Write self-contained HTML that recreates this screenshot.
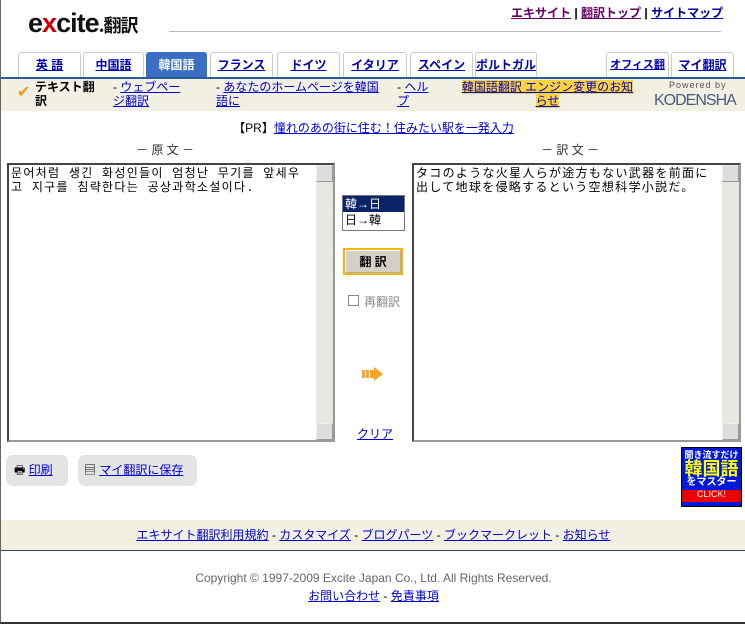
<!DOCTYPE html>
<html><head><meta charset="utf-8"><style>
*{margin:0;padding:0;box-sizing:border-box}
body{width:745px;height:624px;background:#fff;font-family:"Liberation Sans","Noto Sans CJK JP",sans-serif;font-size:12px;position:relative;overflow:hidden;border-left:1px solid #666;border-bottom:2px solid #333}
a{color:#0000cc;text-decoration:underline}
.abs{position:absolute}
.tab{position:absolute;top:52px;height:26px;border:1px solid #ccc;border-bottom:none;border-radius:3px 3px 0 0;background:#fff;text-align:center;line-height:25px;font-weight:bold;font-size:12px}
.tab a{color:#0000aa}
.tab.on{background:#3a6fc4;border-color:#3a6fc4}
.tab.on span{color:#fff}
.ta{position:absolute;top:163px;height:279px;border:2px inset #999;background:#fff;font-family:"Liberation Mono","Noto Sans CJK JP",monospace;font-size:12px;letter-spacing:1.3px;line-height:14px;padding:2px 20px 0 2px}
.sb{position:absolute;right:0;top:0;bottom:0;width:17px;background:#e8e8e2}
.sb i{position:absolute;left:0;width:17px;height:17px;background:#ddd;border:1px outset #eee}
.btn{position:absolute;top:455px;height:31px;background:#e4e4e4;border-radius:7px;line-height:31px;font-size:12px}
</style></head><body>
<div class="abs" style="left:27px;top:8px;font:bold 27px 'Liberation Sans',sans-serif;color:#111;letter-spacing:-1px">e<span style="color:#c00">x</span>cite<span style="font-size:18px;font-family:'Noto Sans CJK JP',sans-serif">.翻訳</span></div>
<div class="abs" style="left:168px;top:31px;width:552px;border-top:1px solid #bbb"></div>
<div class="abs" style="left:510px;top:4px;font-size:12px;font-weight:bold"><a style="color:#660066">エキサイト</a> | <a style="color:#660066">翻訳トップ</a> | <a style="color:#0000aa">サイトマップ</a></div>
<div class="tab" style="left:17px;width:63px"><a>英 語</a></div>
<div class="tab" style="left:82px;width:61px"><a>中国語</a></div>
<div class="tab on" style="left:145px;width:61px"><span>韓国語</span></div>
<div class="tab" style="left:209px;width:63px"><a>フランス</a></div>
<div class="tab" style="left:276px;width:63px"><a>ドイツ</a></div>
<div class="tab" style="left:342px;width:64px"><a>イタリア</a></div>
<div class="tab" style="left:409px;width:63px"><a>スペイン</a></div>
<div class="tab" style="left:474px;width:62px"><a>ポルトガル</a></div>
<div class="tab" style="left:605px;width:63px;font-size:11px"><a>オフィス翻訳</a></div>
<div class="tab" style="left:670px;width:63px"><a>マイ翻訳</a></div>
<div class="abs" style="left:0;top:77px;width:745px;height:2px;background:#2a5c9a"></div>
<div class="abs" style="left:0;top:79px;width:745px;height:32px;background:#f1f0e2"></div>
<div class="abs" style="left:16px;top:82px;color:#f39a1a;font-size:16px">✔</div>
<div class="abs" style="left:34px;top:80px;width:66px;font-weight:bold;line-height:14px">テキスト翻訳</div>
<div class="abs" style="left:112px;top:80px;width:70px;line-height:14px">- <a>ウェブページ翻訳</a></div>
<div class="abs" style="left:215px;top:80px;width:170px;line-height:14px">- <a>あなたのホームページを韓国語に</a></div>
<div class="abs" style="left:396px;top:80px;width:36px;line-height:14px">- <a>ヘルプ</a></div>
<div class="abs" style="left:455px;top:80px;width:183px;line-height:14px;text-align:center"><a style="background:#fcd33a">韓国語翻訳 エンジン変更のお知らせ</a></div>
<div class="abs" style="left:668px;top:80px;font-size:9px;color:#555;letter-spacing:1px">Powered by</div>
<div class="abs" style="left:653px;top:92px;font-size:16px;color:#4a5a7a;letter-spacing:-1px">KODENSHA</div>
<div class="abs" style="left:0;top:119px;width:745px;text-align:center">【PR】<a>憧れのあの街に住む！住みたい駅を一発入力</a></div>
<div class="abs" style="left:135px;top:141px;color:#333">－ 原 文 －</div>
<div class="abs" style="left:540px;top:141px;color:#333">－ 訳 文 －</div>
<div class="ta" style="left:6px;width:328px;padding-right:24px">문어처럼 생긴 화성인들이 엄청난 무기를 앞세우고 지구를 침략한다는 공상과학소설이다.<div class="sb"><i style="top:0"></i><i style="bottom:0"></i></div></div>
<div class="ta" style="left:411px;width:329px">タコのような火星人らが途方もない武器を前面に出して地球を侵略するという空想科学小説だ。<div class="sb"><i style="top:0"></i><i style="bottom:0"></i></div></div>
<div class="abs" style="left:341px;top:195px;width:63px;height:36px;border:1px solid #777;background:#fff;line-height:16px">
<div style="background:#0a246a;color:#fff;padding-left:2px">韓→日</div><div style="padding-left:2px">日→韓</div></div>
<div class="abs" style="left:342px;top:248px;width:60px;height:27px;border:2px solid #f5b400;background:#d4d0c8;text-align:center;line-height:22px;font-weight:bold"><div style="border:1px outset #fff;height:23px">翻 訳</div></div>
<div class="abs" style="left:347px;top:295px;width:11px;height:11px;border:1px solid #888"></div>
<div class="abs" style="left:363px;top:293px;color:#888">再翻訳</div>
<svg class="abs" style="left:361px;top:366px" width="22" height="16"><rect x="0" y="4" width="3" height="8" fill="#f5a623"/><rect x="4" y="4" width="3" height="8" fill="#f5a623"/><rect x="8" y="4" width="4" height="8" fill="#f5a623"/><path d="M12 1 L21 8 L12 15Z" fill="#f5a623"/></svg>
<div class="abs" style="left:356px;top:425px"><a>クリア</a></div>
<div class="btn" style="left:5px;width:62px;padding-left:8px">🖶 <a>印刷</a></div>
<div class="btn" style="left:77px;width:119px;padding-left:6px">▤ <a>マイ翻訳に保存</a></div>
<div class="abs" style="left:680px;top:447px;width:61px;height:60px;background:#0018d8;border:1px solid #000;text-align:center;line-height:1;overflow:hidden">
<div style="color:#fff;font-size:9px;font-weight:bold;margin-top:3px;white-space:nowrap">聞き流すだけ</div>
<div style="color:#ff0;font-size:18px;font-weight:bold">韓国語</div>
<div style="color:#fff;font-size:10px;font-weight:bold">をマスター</div>
<div style="background:#e00;color:#fff;font-size:9px;margin-top:2px;height:12px">CLICK!</div></div>
<div class="abs" style="left:0;top:520px;width:745px;height:30px;background:#f1f0e2;text-align:center;line-height:30px"><a>エキサイト翻訳利用規約</a> - <a>カスタマイズ</a> - <a>ブログパーツ</a> - <a>ブックマークレット</a> - <a>お知らせ</a></div>
<div class="abs" style="left:0;top:550px;width:745px;height:1px;background:#2a4a7a"></div>
<div class="abs" style="left:0;top:571px;width:745px;text-align:center;color:#666">Copyright © 1997-2009 Excite Japan Co., Ltd. All Rights Reserved.</div>
<div class="abs" style="left:0;top:587px;width:745px;text-align:center"><a>お問い合わせ</a> - <a>免責事項</a></div>
</body></html>
